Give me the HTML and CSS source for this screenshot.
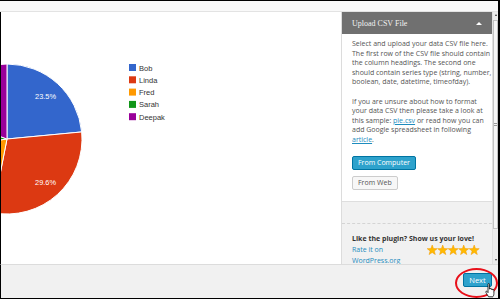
FILE: index.html
```html
<!DOCTYPE html>
<html>
<head>
<meta charset="utf-8">
<link rel="stylesheet" href="styles.css">
</head>
<body>
<div class="frame">
  <div class="topstrip"></div>
  <div class="main">
    <div class="chart">
      <svg class="chart-svg" width="340" height="252" viewBox="0 0 340 252">
        <g transform="translate(-1,-12)">
          <g stroke="#fff" stroke-width="1">
            <path d="M7,139 L7,64 A75,75 0 0 1 81.67,131.94 Z" fill="#3366cc"/>
            <path d="M7,139 L81.67,131.94 A75,75 0 0 1 -7.52,212.58 Z" fill="#dc3912"/>
            <path d="M7,139 L-7.52,212.58 A75,75 0 0 1 -67.27,149.44 Z" fill="#ff9900"/>
            <path d="M7,139 L-67.27,149.44 A75,75 0 0 1 -63.48,113.35 Z" fill="#109618"/>
            <path d="M7,139 L-63.48,113.35 A75,75 0 0 1 7,64 Z" fill="#990099"/>
          </g>
          <text class="slice-label" x="45.5" y="98.7" text-anchor="middle">23.5%</text>
          <text class="slice-label" x="45.5" y="184.7" text-anchor="middle">29.6%</text>
          <g class="legend">
            <rect x="129" y="64" width="7" height="7" fill="#3366cc"/>
            <text x="139" y="70.5">Bob</text>
            <rect x="129" y="76.3" width="7" height="7" fill="#dc3912"/>
            <text x="139" y="82.8">Linda</text>
            <rect x="129" y="88.6" width="7" height="7" fill="#ff9900"/>
            <text x="139" y="95.1">Fred</text>
            <rect x="129" y="100.9" width="7" height="7" fill="#109618"/>
            <text x="139" y="107.4">Sarah</text>
            <rect x="129" y="113.2" width="7" height="7" fill="#990099"/>
            <text x="139" y="119.7">Deepak</text>
          </g>
        </g>
      </svg>
    </div>
    <aside class="panel">
      <div class="panel-head">
        <span class="panel-title">Upload CSV File</span>
        <span class="caret"></span>
      </div>
      <div class="panel-body">
        <p>Select and upload your data CSV file here.<br>The first row of the CSV file should contain<br>the column headings. The second one<br>should contain series type (string, number,<br>boolean, date, datetime, timeofday).</p>
        <p>If you are unsure about how to format<br>your data CSV then please take a look at<br>this sample: <a href="#">pie.csv</a> or read how you can<br>add Google spreadsheet in following<br><a href="#">article</a>.</p>
        <div class="buttons">
          <span class="btn btn-primary">From Computer</span>
          <span class="btn btn-default">From Web</span>
        </div>
      </div>
      <div class="panel-gap"></div>
      <div class="love">
        <div class="love-title">Like the plugin? Show us your love!</div>
        <div class="love-row">
          <a class="rate" href="#">Rate it on<br>WordPress.org</a>
          <svg class="stars" width="53" height="10" viewBox="0 0 53 10">
            <defs>
              <polygon id="star" points="5.2,0 6.49,3.52 10.24,3.66 7.29,5.98 8.32,9.59 5.2,7.5 2.09,9.59 3.11,5.98 0.16,3.66 3.91,3.52"/>
            </defs>
            <g fill="#ffba00" stroke="#f29a00" stroke-width="0.5">
              <use href="#star" x="0"/>
              <use href="#star" x="10.5"/>
              <use href="#star" x="21"/>
              <use href="#star" x="31.5"/>
              <use href="#star" x="42"/>
            </g>
          </svg>
        </div>
      </div>
    </aside>
    <div class="scrollbar">
      <span class="arrow-up"></span>
      <div class="thumb"><span class="grip"></span></div>
      <span class="arrow-down"></span>
    </div>
  </div>
  <div class="footer">
    <span class="btn-next">Next</span>
    <span class="ring"></span>
    <svg class="cursor" width="11" height="15" viewBox="0 0 11 15">
      <path d="M3,1.2 C3,0.3 4.4,0.3 4.4,1.2 L4.4,6 L5,6 C5,5.2 6.3,5.2 6.3,6 L6.3,6.5 C6.3,5.8 7.6,5.8 7.6,6.6 L7.6,7 C7.6,6.3 8.9,6.3 8.9,7.1 L8.9,10.5 C8.9,12 8.2,13.8 7.6,13.8 L3.6,13.8 C3.1,13.2 1.6,10.6 0.9,9.3 C0.5,8.4 1.5,7.8 2.1,8.5 L3,9.6 Z" fill="#fff" stroke="#000" stroke-width="0.8" stroke-linejoin="round"/>
    </svg>
  </div>
</div>
</body>
</html>
```

FILE: styles.css
```css
html, body {
  margin: 0;
  padding: 0;
  background: #fff;
}

body {
  width: 500px;
  height: 299px;
  overflow: hidden;
}

.frame {
  width: 500px;
  height: 299px;
  box-sizing: border-box;
  border-top: 1px solid #000;
  border-right: 2px solid #000;
  border-bottom: 1px solid #000;
  display: flex;
  flex-direction: column;
  background: #fff;
}

.topstrip {
  flex: none;
  height: 10px;
  background: #f9f9f9;
  border-bottom: 1px solid #e3e3e3;
}

.main {
  flex: none;
  height: 252px;
  display: flex;
  border-left: 1px solid #000;
}

.chart {
  flex: none;
  width: 340px;
  height: 252px;
  overflow: hidden;
  background: #fff;
}

.chart-svg {
  display: block;
}

.slice-label {
  font-family: "Liberation Sans", Arial, sans-serif;
  font-size: 7.4px;
  fill: #ffffff;
}

.legend text {
  font-family: "Liberation Sans", Arial, sans-serif;
  font-size: 7.5px;
  fill: #333;
}

.panel {
  flex: none;
  width: 150px;
  height: 252px;
  border-left: 1px solid #dcdcdc;
  background: #f1f1f1;
  overflow: hidden;
  font-family: "Open Sans", sans-serif;
  font-size: 7px;
  color: #555;
}

.panel-head {
  height: 22px;
  display: flex;
  align-items: center;
  justify-content: space-between;
  padding: 0 10px;
  background: #707070;
}

.panel-title {
  font-family: "Liberation Serif", "Times New Roman", serif;
  font-size: 8px;
  color: #f2f2f2;
}

.caret {
  width: 0;
  height: 0;
  border-left: 3px solid transparent;
  border-right: 3px solid transparent;
  border-bottom: 3px solid #fff;
}

.panel-body {
  background: #fff;
  padding: 5px 10px 11px;
  border-bottom: 1px solid #dedede;
}

.panel-body p {
  margin: 0;
  line-height: 9.6px;
  white-space: nowrap;
}

.panel-body p + p {
  margin-top: 9.6px;
}

.panel a {
  color: #1e8cbe;
}

.buttons {
  margin-top: 11.4px;
  display: flex;
  flex-direction: column;
  align-items: flex-start;
  gap: 6px;
}

.btn {
  display: block;
  box-sizing: border-box;
  height: 14px;
  line-height: 12px;
  padding: 0 5px;
  border-radius: 2px;
  font-size: 7px;
  white-space: nowrap;
}

.btn-primary {
  background: #2ea2cc;
  border: 1px solid #0074a2;
  color: #fff;
}

.btn-default {
  background: #f7f7f7;
  border: 1px solid #cccccc;
  color: #555;
}

.panel-gap {
  height: 21px;
  border-bottom: 1px dashed #d4d4d4;
}

.love {
  padding: 9px 12px 0 10px;
  line-height: 11px;
}

.love-title {
  font-weight: bold;
  color: #333;
  white-space: nowrap;
}

.love-row {
  display: flex;
  justify-content: space-between;
  align-items: flex-start;
}

.rate {
  text-decoration: none;
}

.stars {
  display: block;
  margin-top: 1px;
}

.scrollbar {
  flex: none;
  width: 6px;
  height: 252px;
  box-sizing: border-box;
  background: #ececec;
  border-left: 1px solid #e0e0e0;
  display: flex;
  flex-direction: column;
  align-items: center;
}

.arrow-up {
  margin-top: 2px;
  width: 0;
  height: 0;
  border-left: 1.5px solid transparent;
  border-right: 1.5px solid transparent;
  border-bottom: 2px solid #333;
}

.thumb {
  margin-top: 4px;
  width: 5px;
  height: 209px;
  box-sizing: border-box;
  background: #f6f6f6;
  border: 1px solid #c2c2c2;
  display: flex;
  align-items: center;
  justify-content: center;
}

.grip {
  width: 3px;
  height: 3px;
  border-top: 1px solid #999;
  border-bottom: 1px solid #999;
  box-sizing: border-box;
}

.arrow-down {
  margin-top: 30px;
  width: 0;
  height: 0;
  border-left: 1.5px solid transparent;
  border-right: 1.5px solid transparent;
  border-top: 2px solid #333;
}

.footer {
  flex: 1;
  position: relative;
  border-left: 1px solid #000;
  border-top: 1px solid #dcdcdc;
  background: #f1f1f1;
  display: flex;
  justify-content: flex-end;
  align-items: flex-start;
  padding: 8px 6px 0 0;
}

.btn-next {
  display: block;
  box-sizing: border-box;
  width: 29px;
  height: 14px;
  line-height: 12px;
  text-align: center;
  background: #2ea2cc;
  border: 1px solid #0074a2;
  border-radius: 2px;
  color: #fff;
  font-family: "Open Sans", sans-serif;
  font-size: 7.5px;
}

.ring {
  position: absolute;
  right: 0;
  top: 3px;
  width: 43px;
  height: 30px;
  box-sizing: border-box;
  border: 2px solid #e8101a;
  border-radius: 50%;
}

.cursor {
  position: absolute;
  left: 484px;
  top: 18px;
}
```
